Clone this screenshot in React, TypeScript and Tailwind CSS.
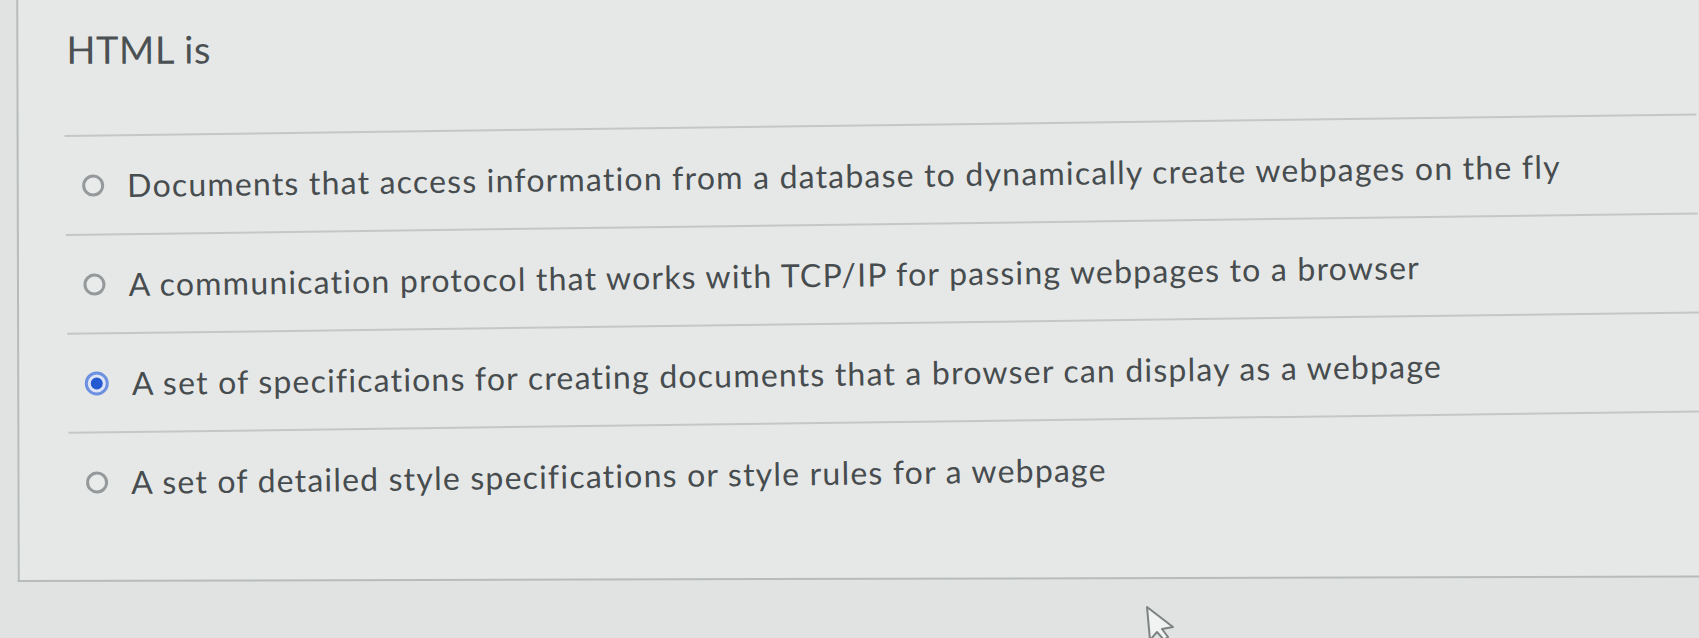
import { useState } from "react";

const choices = [
  "Documents that access information from a database to dynamically create webpages on the fly",
  "A communication protocol that works with TCP/IP for passing webpages to a browser",
  "A set of specifications for creating documents that a browser can display as a webpage",
  "A set of detailed style specifications or style rules for a webpage",
];

const Radio = ({ checked }: { checked: boolean }) => {
  if (checked)
    return (
      <span className="flex h-[24px] w-[24px] shrink-0 items-center justify-center rounded-full border-[3px] border-[#6d90e0] bg-[#dde4f5]">
        <span className="h-[12px] w-[12px] rounded-full bg-[#2459d1]" />
      </span>
    );
  return (
    <span className="h-[22px] w-[22px] shrink-0 rounded-full border-[3px] border-[#96999b] bg-[#e9ebea]" />
  );
};

const App = () => {
  const [picked, setPicked] = useState(2);

  return (
    <div
      className="relative h-[638px] w-full overflow-hidden bg-[#e1e3e2] pl-[17px]"
      style={{ fontFamily: "Lato, 'Open Sans', sans-serif" }}
    >
      <div className="h-[582px] origin-left -rotate-[0.15deg] border-b-2 border-l-2 border-[#b7bbbb] bg-[#e6e8e7] pl-[48px] pt-[25px]">
        <h1 className="text-[38px] leading-[48px] tracking-[0.6px] text-[#4b5053]">HTML is</h1>

        <ul className="mt-[62px] origin-left -rotate-[0.6deg]">
          {choices.map((text, i) => (
            <li
              key={i}
              onClick={() => setPicked(i)}
              className="flex h-[99px] cursor-pointer items-center border-t-2 border-[#c4c7c7] pl-[17px]"
            >
              <Radio checked={picked === i} />
              <span className="ml-[23px] text-[32px] tracking-[1.2px] text-[#474c4f]">{text}</span>
            </li>
          ))}
        </ul>
      </div>

      {/* mouse pointer */}
      <svg
        className="absolute left-[1142px] top-[604px]"
        width="36"
        height="40"
        viewBox="0 0 36 40"
      >
        <path
          d="M5 3 L8 36 L15 28 L22 36 L26 33 L20 25 L31 23 Z"
          fill="#f1f2f2"
          stroke="#7d8283"
          strokeWidth="2"
          strokeLinejoin="round"
        />
      </svg>
    </div>
  );
};

export default App;
